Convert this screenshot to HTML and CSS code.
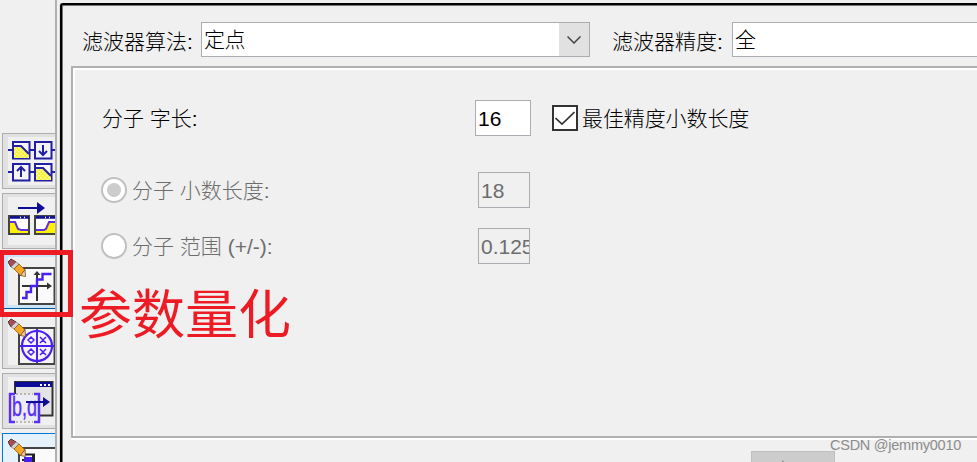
FILE: index.html
```html
<!DOCTYPE html>
<html lang="zh-CN">
<head>
    <meta charset="UTF-8">
    <title>滤波器量化参数</title>
    <link rel="stylesheet" href="styles.css">
</head>
<body>

<svg width="0" height="0" class="defs">
    <defs>
        <pattern id="dots" width="4" height="4" patternUnits="userSpaceOnUse">
            <rect width="4" height="4" fill="#f7f03c"/>
            <path d="M0 0h1.5v1.5H0zM2 2h1.5v1.5H2z" fill="#fffbb0"/>
        </pattern>
        <g id="pencil">
            <path d="M0 3L3 0l5 3-5 5z" fill="#a84e56" stroke="#5c3438"/>
            <path d="M3 8l5-5 3 2-5 5z" fill="#d4d4d4" stroke="#777" stroke-width=".7"/>
            <path d="M6 10l5-5 6 6-4 6z" fill="#f5a623" stroke="#8a5a17" stroke-width=".8"/>
            <path d="M12.500 16.500l4.500-6 .500 7z" fill="#f5cfa0" stroke="#6b4a2a" stroke-width=".8"/>
        </g>
    </defs>
</svg>

<div class="app">
    <div class="sidebar">
        <!-- Перетворення фільтра -->
        <div class="tool">
            <svg width="48" height="48" viewBox="0 0 48 48">
                <path d="M0 13h48M0 35h48" stroke="#2020a0" stroke-width="2"/>
                <g fill="#f4f4fa" stroke="#2020a0" stroke-width="2">
                    <rect x="5" y="5" width="16.5" height="16.5"/>
                    <rect x="27" y="5" width="16.5" height="16.5"/>
                    <rect x="5" y="27" width="16.5" height="16.5"/>
                    <rect x="27" y="27" width="16.5" height="16.5"/>
                </g>
                <path d="M6 9h7l8 8v4H6zM28 31h7l8 8v4H28z" fill="url(#dots)"/>
                <path d="M6 9h7l8 8M28 31h7l8 8M35 8v10M31 14l4 4 4-4M13 40V30M9 34l4-4 4 4" fill="none" stroke="#2020a0" stroke-width="2"/>
            </svg>
        </div>
        <div class="tool">
            <svg width="48" height="48" viewBox="0 0 48 48">
                <path d="M10 11h21" stroke="#0c0c96" stroke-width="2"/>
                <path d="M29 5l8 6-8 6z" fill="#0c0c96"/>
                <g fill="#fff" stroke="#444" stroke-width="2">
                    <rect x="1" y="19" width="20" height="18"/>
                    <rect x="27" y="19" width="21" height="18"/>
                </g>
                <path d="M2 26h5l4 8h9v2H2zM28 34h9l4-8h7v10H28z" fill="#fff200"/>
                <path d="M2 25h5l3 7 3 1h7M28 33h8l2-1 3-7h7" fill="none" stroke="#6033d8" stroke-width="2"/>
                <path d="M2 20.500h19M28 20.500h20" stroke="#0c0c96" stroke-width="2.500"/>
                <path d="M12 20.500h1M16 20.500h1M37 20.500h1M41 20.500h1" stroke="#fff" stroke-width="1.500"/>
            </svg>
        </div>
        <div class="tool active">
            <svg width="48" height="48" viewBox="0 0 48 48">
                <rect x="11" y="11" width="35.500" height="36" fill="#fafafa" stroke="#444" stroke-width="2"/>
                <path d="M29 17v27M14 29h26" stroke="#333" stroke-width="2"/>
                <path d="M25.500 18l3.500-4 3.500 4zM39 25.500l5 3.500-5 3.500z" fill="#333"/>
                <path d="M14 41h4.500v-6H23v-6h6v-6.500h5.500V17h9" fill="none" stroke="#4a20f0" stroke-width="2.400"/>
                <use href="#pencil" y="2"/>
            </svg>
        </div>
        <div class="tool">
            <svg width="48" height="48" viewBox="0 0 48 48">
                <rect x="11" y="11" width="35.500" height="36" fill="#f4f4f4" stroke="#444" stroke-width="2"/>
                <circle cx="29" cy="29" r="15" fill="none" stroke="#4a20f0" stroke-width="2.200"/>
                <path d="M29 12v34M12 29h34" stroke="#4a20f0" stroke-width="2"/>
                <path d="M23 20l3 3-3 3-3-3zM23 32l3 3-3 3-3-3zM32 20l6 6M38 20l-6 6M32 32l6 6M38 32l-6 6" fill="none" stroke="#4a20f0" stroke-width="1.500"/>
                <use href="#pencil" y="2"/>
            </svg>
        </div>
        <div class="tool">
            <svg width="48" height="48" viewBox="0 0 48 48">
                <rect x="7" y="5" width="37.500" height="33.500" fill="#e4e4e4" stroke="#333" stroke-width="2"/>
                <path d="M7 7.500h37" stroke="#0c0c96" stroke-width="5"/>
                <path d="M32 8h2M36 8h2M40 8h2" stroke="#fff" stroke-width="2"/>
                <path d="M2 17h29v28H2z" fill="#ececf4"/>
                <path d="M7 17H2v28h5M26 17h5v28h-5" fill="none" stroke="#5a30f5" stroke-width="2.500"/>
                <path d="M8 17h17M8 45h17" stroke="#b0a890" stroke-width="1.500" stroke-dasharray="2 2"/>
                <text x="4" y="39" class="coef" textLength="25" lengthAdjust="spacingAndGlyphs">b,ɑ</text>
                <path d="M18 25h18" stroke="#0c0c96" stroke-width="2"/>
                <path d="M35 20l7 5-7 5z" fill="#0c0c96"/>
            </svg>
        </div>
        <div class="tool hover">
            <svg width="48" height="48" viewBox="0 0 48 48">
                <rect x="11" y="11" width="37" height="36" fill="#fafafa" stroke="#444" stroke-width="2"/>
                <path d="M14 17.500h13M14 23h13" stroke="#222" stroke-width="2"/>
                <path d="M16 20h9v8h-9z" fill="#4a20f0"/>
                <path d="M25.500 17v11" stroke="#222" stroke-width="3"/>
                <use href="#pencil" y="2"/>
            </svg>
        </div>
    </div>

    <div class="main">
        <div class="top-row">
            <span class="label">滤波器算法:</span>
            <div class="select algorithm">
                <span>定点</span>
                <div class="arrow">
                    <svg width="14" height="8" viewBox="0 0 14 8"><path d="M.5.5L7 7 13.500.5" fill="none" stroke="#444" stroke-width="1.500"/></svg>
                </div>
            </div>
            <span class="label second">滤波器精度:</span>
            <div class="select precision"><span>全</span></div>
        </div>

        <div class="group">
            <div class="row">
                <span class="name">分子 字长:</span>
                <div class="field word">16</div>
                <div class="checkbox">
                    <svg width="20" height="15" viewBox="0 0 20 15"><path d="M.5 7L7 13 19.500 1" fill="none" stroke="#333" stroke-width="1.700"/></svg>
                </div>
                <span class="label">最佳精度小数长度</span>
            </div>
            <div class="row disabled">
                <span class="radio checked"></span>
                <span class="name">分子 小数长度:</span>
                <div class="field">18</div>
            </div>
            <div class="row disabled">
                <span class="radio"></span>
                <span class="name">分子 范围 (+/-):</span>
                <div class="field">0.125</div>
            </div>
        </div>

        <div class="apply">应用</div>
    </div>
</div>

<div class="mark"></div>
<div class="note">参数量化</div>
<div class="watermark">CSDN @jemmy0010</div>

</body>
</html>
```
FILE: styles.css
```css
* {
    box-sizing: border-box;
}
body {
    margin: 0;
    width: 977px;
    height: 462px;
    overflow: hidden;
    position: relative;
    background-color: #f0f0f0;
    color: #000;
    font-family: "Liberation Sans", "Noto Sans CJK SC", sans-serif;
    font-size: 21px;
    font-weight: 300;
    line-height: 30px;
    white-space: nowrap;
}
.defs {
    position: absolute;
}
.app {
    display: flex;
    height: 462px;
    overflow: hidden;
}
.sidebar {
    flex: none;
    width: 57px;
    padding: 133px 0 0 2px;
    border-right: 2px solid #b0b0b0;
    overflow: hidden;
    display: flex;
    flex-direction: column;
    gap: 4px;
}
.tool {
    flex: none;
    width: 60px;
    height: 56px;
    padding: 3px 0 0 5px;
    border: 1px solid #adadad;
    background-color: #e1e1e1;
}
.tool svg {
    display: block;
    background-color: #f0f0f0;
}
.tool.active {
    background-color: #cce4f7;
    border-color: #005499;
}
.tool.hover {
    background-color: #e5f1fb;
    border-color: #0078d7;
}
.tool.hover svg {
    background-color: #e5f1fb;
}
.coef {
    font: 27px "Liberation Sans", sans-serif;
    fill: #5a30f5;
    stroke: #5a30f5;
    stroke-width: 0.4px;
}
/* Основна панель */
.main {
    flex: none;
    width: 930px;
    height: 480px;
    margin: 3px 0 0 3px;
    border: 2px solid #000;
    border-right: none;
    border-radius: 3px 0 0 0;
    box-shadow: inset 1px 1px 0 #777, -1px 0 0 #ddd;
}
.top-row {
    display: flex;
    height: 61px;
    padding: 17px 0 0 20px;
}
.label {
    flex: none;
    height: 34px;
    line-height: 39px;
}
.top-row .label {
    width: 119px;
}
.top-row .label.second {
    width: 120px;
    margin-left: 22px;
}
.select {
    flex: none;
    display: flex;
    justify-content: space-between;
    height: 35px;
    padding-left: 2px;
    line-height: 34px;
    border: 1px solid #abadb3;
    background-color: #fff;
}
.algorithm {
    width: 389px;
}
.algorithm span {
    letter-spacing: -0.4px;
}
.precision {
    width: 260px;
}
.arrow {
    width: 30px;
    display: flex;
    align-items: center;
    justify-content: center;
    background-color: #e1e1e1;
}
.group {
    height: 372px;
    margin-left: 9px;
    padding: 30px 0 0 27px;
    border: 2px solid #b0b0b0;
    border-right: none;
    box-shadow: inset 2px 2px 0 #fff, 0 2px 0 #fff;
}
.row {
    display: flex;
    align-items: center;
    height: 40px;
}
.row:first-child {
    padding-left: 2px;
    margin-bottom: 32px;
}
.row.disabled {
    margin-bottom: 16px;
    padding-left: 1px;
    color: #6d6d6d;
}
.row .name {
    width: 373px;
    padding-top: 2px;
}
.disabled .name {
    width: 346px;
}
.field {
    flex: none;
    width: 52px;
    height: 36px;
    padding-left: 2px;
    line-height: 36px;
    border: 1px solid #abadb3;
    overflow: hidden;
}
.field.word {
    width: 56px;
    background-color: #fff;
}
.checkbox {
    width: 26px;
    height: 26px;
    margin: 0 4px 0 21px;
    display: flex;
    align-items: center;
    justify-content: center;
    border: 2px solid #333;
    background-color: #fff;
}
.row .label {
    line-height: 35px;
    letter-spacing: -0.1px;
}
.radio {
    width: 26px;
    height: 26px;
    margin-right: 5px;
    border: 2px solid #c0c0c0;
    border-radius: 50%;
    background-color: #fff;
}
.radio.checked {
    background: radial-gradient(circle, #ccc 6.5px, #fff 7.5px);
}
.apply {
    width: 84px;
    height: 32px;
    margin: 13px 0 0 689px;
    text-align: center;
    line-height: 38px;
    border: 1px solid #bfbfbf;
    background-color: #ccc;
    color: #777;
}
/* Позначки поверх вікна */
.mark {
    position: absolute;
    left: 0;
    top: 250px;
    width: 73px;
    height: 67px;
    border: 5px solid #ed1c24;
    border-left-width: 4px;
}
.note {
    position: absolute;
    left: 79px;
    top: 276px;
    font-family: "Noto Sans CJK SC", sans-serif;
    font-size: 53px;
    font-weight: 400;
    line-height: 70px;
    color: #ed1c24;
}
.watermark {
    position: absolute;
    left: 830px;
    top: 436px;
    font-size: 14.5px;
    line-height: 18px;
    letter-spacing: -0.25px;
    color: #8c8c8c;
}
```
